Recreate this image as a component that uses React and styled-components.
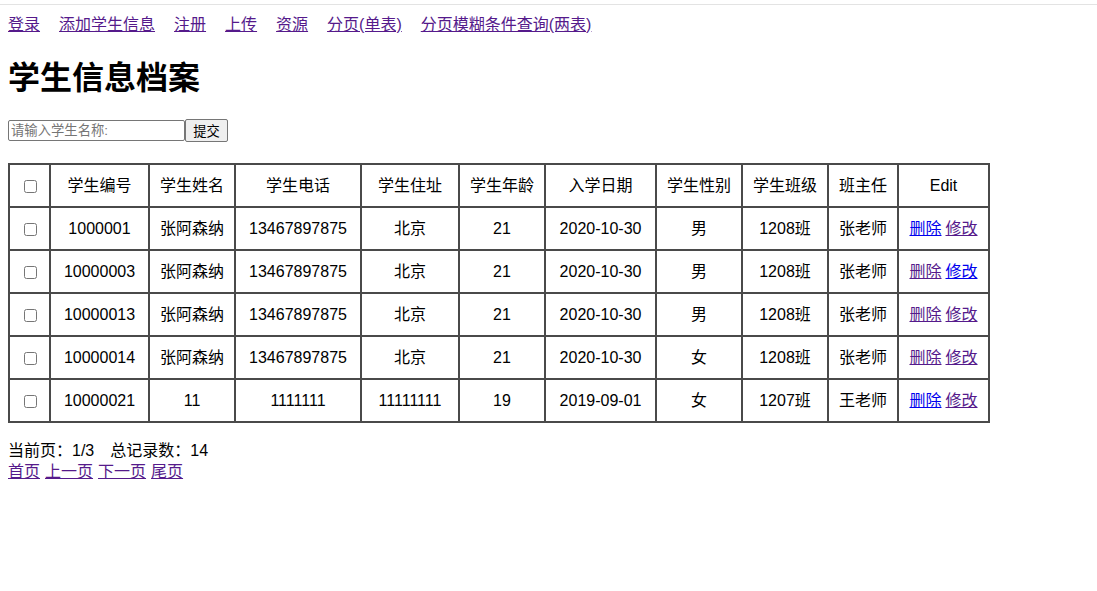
import React from "react";
import styled, { createGlobalStyle } from "styled-components";

const Global = createGlobalStyle`
  html, body { margin: 0; padding: 0; background: #fff; }
  body {
    font-family: "Liberation Sans", "Noto Sans CJK SC", sans-serif;
    font-size: 16px;
    color: #000;
  }
`;

const TopRule = styled.div`
  height: 1px;
  margin-top: 4px;
  background: #e3e3e3;
`;

const Page = styled.div`
  padding: 0 8px;
`;

const Nav = styled.nav`
  display: flex;
  gap: 19px;
  margin-top: 9px;
  line-height: 21px;
`;

const Link = styled.a`
  color: ${(p) => (p.$fresh ? "#0000ee" : "#551a8b")};
  text-decoration: underline;
  cursor: pointer;
`;

const Title = styled.h1`
  font-size: 32px;
  font-weight: bold;
  line-height: 42px;
  margin: 22px 0 20px;
`;

const SearchForm = styled.form`
  display: flex;
  align-items: flex-end;
  margin: 0 0 21px;
`;

const SearchInput = styled.input`
  box-sizing: border-box;
  width: 177px;
  height: 21px;
  margin: 0 0 1px;
  padding: 1px 2px;
  border: 1px solid #767676;
  border-radius: 2px;
  font-family: "Liberation Sans", "Noto Sans CJK SC", sans-serif;
  font-size: 13.33px;
  &::placeholder { color: #757575; }
`;

const SubmitButton = styled.button`
  box-sizing: border-box;
  width: 43px;
  height: 23px;
  margin: 0;
  padding: 0;
  border: 1px solid #767676;
  border-radius: 2px;
  background: #efefef;
  font-family: "Liberation Sans", "Noto Sans CJK SC", sans-serif;
  font-size: 13.33px;
  color: #000;
`;

const Table = styled.table`
  box-sizing: border-box;
  width: 982px;
  table-layout: fixed;
  border-collapse: separate;
  border-spacing: 0;
  border: 1px solid #4a4a4a;
`;

const Row = styled.tr`
  height: 43px;
`;

const Cell = styled.td`
  box-sizing: border-box;
  border: 1px solid #4a4a4a;
  padding: 0;
  text-align: center;
  vertical-align: middle;
  line-height: 20px;
  height: 43px;
  white-space: nowrap;
`;

const HeadCell = styled(Cell).attrs({ as: "th" })`
  font-weight: normal;
`;

const Check = styled.input.attrs({ type: "checkbox" })`
  width: 13px;
  height: 13px;
  margin: 3px 3px 3px 4px;
  vertical-align: middle;
`;

const ActionGroup = styled.span`
  display: inline-flex;
  gap: 4px;
`;

const Status = styled.div`
  margin-top: 17px;
  line-height: 21px;
`;

const Gap = styled.span`
  display: inline-block;
  width: 16px;
`;

const Pager = styled.div`
  display: flex;
  gap: 5px;
  line-height: 21px;
`;

const widths = [41, 99, 86, 126, 98, 86, 111, 86, 86, 70, 91];
const headers = ["学生编号", "学生姓名", "学生电话", "学生住址", "学生年龄", "入学日期", "学生性别", "学生班级", "班主任", "Edit"];

const rows = [
  { id: "1000001", name: "张阿森纳", phone: "13467897875", addr: "北京", age: "21", date: "2020-10-30", sex: "男", cls: "1208班", teacher: "张老师", del: true, edit: false },
  { id: "10000003", name: "张阿森纳", phone: "13467897875", addr: "北京", age: "21", date: "2020-10-30", sex: "男", cls: "1208班", teacher: "张老师", del: false, edit: true },
  { id: "10000013", name: "张阿森纳", phone: "13467897875", addr: "北京", age: "21", date: "2020-10-30", sex: "男", cls: "1208班", teacher: "张老师", del: false, edit: false },
  { id: "10000014", name: "张阿森纳", phone: "13467897875", addr: "北京", age: "21", date: "2020-10-30", sex: "女", cls: "1208班", teacher: "张老师", del: false, edit: false },
  { id: "10000021", name: "11", phone: "1111111", addr: "11111111", age: "19", date: "2019-09-01", sex: "女", cls: "1207班", teacher: "王老师", del: true, edit: false },
];

const navItems = ["登录", "添加学生信息", "注册", "上传", "资源", "分页(单表)", "分页模糊条件查询(两表)"];

export default function App() {
  return (
    <>
      <Global />
      <TopRule />
      <Page>
        <Nav>
          {navItems.map((n) => (
            <Link key={n}>{n}</Link>
          ))}
        </Nav>
        <Title>学生信息档案</Title>
        <SearchForm onSubmit={(e) => e.preventDefault()}>
          <SearchInput placeholder="请输入学生名称:" />
          <SubmitButton type="submit">提交</SubmitButton>
        </SearchForm>
        <Table>
          <colgroup>
            {widths.map((w, i) => (
              <col key={i} style={{ width: w }} />
            ))}
          </colgroup>
          <thead>
            <Row>
              <HeadCell><Check /></HeadCell>
              {headers.map((h) => (
                <HeadCell key={h}>{h}</HeadCell>
              ))}
            </Row>
          </thead>
          <tbody>
            {rows.map((r) => (
              <Row key={r.id}>
                <Cell><Check /></Cell>
                <Cell>{r.id}</Cell>
                <Cell>{r.name}</Cell>
                <Cell>{r.phone}</Cell>
                <Cell>{r.addr}</Cell>
                <Cell>{r.age}</Cell>
                <Cell>{r.date}</Cell>
                <Cell>{r.sex}</Cell>
                <Cell>{r.cls}</Cell>
                <Cell>{r.teacher}</Cell>
                <Cell>
                  <ActionGroup>
                    <Link $fresh={r.del}>删除</Link>
                    <Link $fresh={r.edit}>修改</Link>
                  </ActionGroup>
                </Cell>
              </Row>
            ))}
          </tbody>
        </Table>
        <Status>
          当前页：1/3<Gap />总记录数：14
        </Status>
        <Pager>
          <Link>首页</Link>
          <Link>上一页</Link>
          <Link>下一页</Link>
          <Link>尾页</Link>
        </Pager>
      </Page>
    </>
  );
}
